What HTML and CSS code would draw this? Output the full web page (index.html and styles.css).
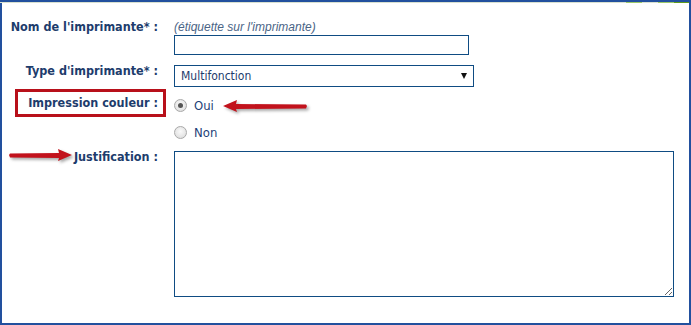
FILE: index.html
```html
<!DOCTYPE html>
<html lang="fr">
<head>
<meta charset="utf-8">
<title>Imprimante</title>
<link rel="stylesheet" href="styles.css">
</head>
<body>
<div class="frame">
  <div class="topbar"></div>
  <form class="form">
    <div class="label label-top">Nom de l'imprimante* :</div>
    <div class="cell">
      <div class="hint">(étiquette sur l'imprimante)</div>
      <input class="text-input" type="text">
    </div>

    <div class="label label-mid">Type d'imprimante* :</div>
    <div class="cell">
      <div class="select-wrap">
        <select class="select">
          <option>Multifonction</option>
        </select>
      </div>
    </div>

    <div class="label label-boxed">Impression couleur :</div>
    <div class="cell radios">
      <label class="option"><input type="radio" name="couleur" checked><span>Oui</span></label>
      <label class="option"><input type="radio" name="couleur"><span>Non</span></label>
    </div>

    <div class="label label-just">Justification :</div>
    <div class="cell">
      <textarea class="textarea"></textarea>
    </div>
  </form>

  <svg class="arrow arrow-oui" width="92" height="20" viewBox="0 0 92 20">
    <polygon class="arrow-fill" points="0,8 14,2 13,6 83,6.5 84,8 83,10.5 13,11 14,14"/>
  </svg>
  <svg class="arrow arrow-just" width="72" height="20" viewBox="0 0 72 20">
    <polygon class="arrow-fill" points="63,8 49,2 50,6 1,6.5 0,8 1,10.5 50,11 49,14"/>
  </svg>
</div>
</body>
</html>
```

FILE: styles.css
```css
* { box-sizing: border-box; }

html, body {
  margin: 0;
  padding: 0;
  background: #ffffff;
}

.frame {
  position: relative;
  width: 691px;
  height: 325px;
  border-left: 2px solid #22509e;
  border-right: 2px solid #22509e;
  border-bottom: 2px solid #22509e;
  background: #ffffff;
  font-family: "DejaVu Sans", Verdana, sans-serif;
  font-stretch: condensed;
}

.topbar {
  height: 3px;
  margin: 0 -2px;
  border-top: 2px solid #22509e;
  background: linear-gradient(to right,
    #d8e0d0 0, #d8e0d0 626px,
    #9cc86a 626px, #9cc86a 642px,
    #d8e0d0 642px, #d8e0d0 658px,
    #9cc86a 658px, #9cc86a 674px,
    #5e9a1c 674px, #5e9a1c 689px,
    #22509e 689px);
}

.form {
  display: grid;
  grid-template-columns: 156px 500px;
  column-gap: 16px;
  margin: 0;
}

.label {
  justify-self: end;
  font-weight: bold;
  font-size: 12.5px;
  line-height: 14px;
  color: #1d3c6c;
  white-space: nowrap;
}

.label-top {
  margin-top: 17px;
}

.label-mid {
  align-self: center;
}

.label-boxed {
  align-self: start;
  margin-top: 2px;
  margin-right: -8px;
  height: 28px;
  padding: 4px 5px 0 10px;
  border: 3px solid #b8101a;
}

.label-just {
  align-self: start;
  margin-top: 7px;
}

.hint {
  margin-top: 17px;
  font-family: "Liberation Sans", Arial, sans-serif;
  font-style: italic;
  font-size: 12px;
  line-height: 14px;
  color: #4a6486;
}

.text-input {
  display: block;
  margin-top: 1px;
  width: 295px;
  height: 20px;
  border: 1px solid #0f4c83;
  border-radius: 0;
  padding: 0 4px;
  background: #fff;
}

.select-wrap {
  position: relative;
  margin-top: 10px;
  width: 300px;
  height: 22px;
}

.select-wrap::after {
  content: "";
  position: absolute;
  right: 7px;
  top: 8px;
  border-left: 3px solid transparent;
  border-right: 3px solid transparent;
  border-top: 6px solid #111111;
  pointer-events: none;
}

.select {
  appearance: none;
  -webkit-appearance: none;
  display: block;
  width: 300px;
  height: 22px;
  border: 1px solid #0f4c83;
  border-radius: 0;
  padding: 0 0 0 6px;
  background: #fff;
  font-family: "DejaVu Sans", Tahoma, sans-serif;
  font-stretch: condensed;
  font-size: 12px;
  color: #1d3c6c;
}

.radios {
  padding-top: 7px;
  display: flex;
  flex-direction: column;
  gap: 5px;
}

.option {
  display: flex;
  align-items: center;
  height: 22px;
  gap: 7px;
  font-size: 13px;
  color: #1e3f78;
}

.option input {
  appearance: none;
  -webkit-appearance: none;
  margin: 0;
  width: 13px;
  height: 13px;
  border: 1px solid #a9a9a9;
  border-radius: 50%;
  background: radial-gradient(circle at 50% 40%, #fafafa 0, #e6e6e6 60%, #d6d6d6 100%);
  position: relative;
}

.option input:checked::after {
  content: "";
  position: absolute;
  left: 3px;
  top: 3px;
  width: 5px;
  height: 5px;
  border-radius: 50%;
  background: #555555;
}

.textarea {
  display: block;
  margin-top: 8px;
  width: 500px;
  height: 146px;
  border: 1px solid #0f4c83;
  border-radius: 0;
  resize: both;
  background: #fff;
}

.arrow {
  position: absolute;
  overflow: visible;
  filter: drop-shadow(2px 2px 1.5px rgba(0, 0, 0, 0.35));
}

.arrow-oui {
  left: 221px;
  top: 98px;
}

.arrow-just {
  left: 7px;
  top: 147px;
}

.arrow-fill {
  fill: #c2121c;
}
```
